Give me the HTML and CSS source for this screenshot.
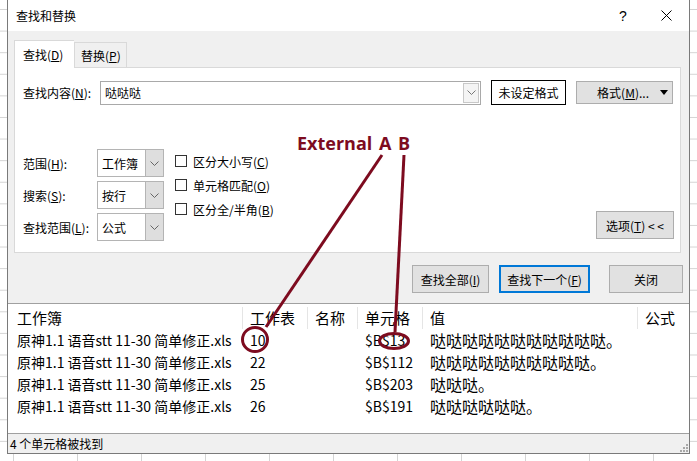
FILE: index.html
```html
<!DOCTYPE html>
<html lang="zh-CN">
<head>
	<meta charset="UTF-8">
	<title>查找和替换</title>
	<link rel="stylesheet" href="styles.css">
</head>
<body>
	<div class="desk">
		<div class="dialog">
			<div class="titlebar">
				<span class="title">查找和替换</span>
				<span class="help">?</span>
				<span class="close">
					<svg width="11" height="11" viewBox="0 0 11 11"><path d="M0.5 0.5L10.5 10.5M10.5 0.5L0.5 10.5" stroke="#000" stroke-width="1"/></svg>
				</span>
			</div>

			<div class="body">
				<div class="tabs">
					<div class="tab active">查找(<u>D</u>)</div>
					<div class="tab">替换(<u>P</u>)</div>
				</div>

				<div class="panel">
					<div class="findrow">
						<span class="findlabel">查找内容(<u>N</u>):</span>
						<div class="combo wide">
							<span class="val">哒哒哒</span>
							<span class="arrow light"><svg width="9" height="5" viewBox="0 0 9 5"><path d="M0.5 0.5L4.5 4.5L8.5 0.5" fill="none" stroke="#777"/></svg></span>
						</div>
						<div class="nofmt">未设定格式</div>
						<div class="btn fmt">格式(<u>M</u>)...<span class="tri"></span></div>
					</div>

					<div class="opts">
						<div class="selects">
							<div class="selrow">
								<span class="sellabel">范围(<u>H</u>):</span>
								<div class="combo sel"><span class="val">工作簿</span><span class="arrow"><svg width="9" height="5" viewBox="0 0 9 5"><path d="M0.5 0.5L4.5 4.5L8.5 0.5" fill="none" stroke="#666"/></svg></span></div>
							</div>
							<div class="selrow">
								<span class="sellabel">搜索(<u>S</u>):</span>
								<div class="combo sel"><span class="val">按行</span><span class="arrow"><svg width="9" height="5" viewBox="0 0 9 5"><path d="M0.5 0.5L4.5 4.5L8.5 0.5" fill="none" stroke="#666"/></svg></span></div>
							</div>
							<div class="selrow">
								<span class="sellabel">查找范围(<u>L</u>):</span>
								<div class="combo sel"><span class="val">公式</span><span class="arrow"><svg width="9" height="5" viewBox="0 0 9 5"><path d="M0.5 0.5L4.5 4.5L8.5 0.5" fill="none" stroke="#666"/></svg></span></div>
							</div>
						</div>

						<div class="checks">
							<div class="check"><span class="box"></span>区分大小写(<u>C</u>)</div>
							<div class="check"><span class="box"></span>单元格匹配(<u>O</u>)</div>
							<div class="check"><span class="box"></span>区分全/半角(<u>B</u>)</div>
						</div>

						<div class="btn options">选项(<u>T</u>) &lt; &lt;</div>
					</div>
				</div>

				<div class="actions">
					<div class="btn findall">查找全部(<u>I</u>)</div>
					<div class="btn findnext">查找下一个(<u>F</u>)</div>
					<div class="btn closebtn">关闭</div>
				</div>
			</div>

			<div class="results">
				<div class="head first">工作簿</div>
				<div class="head">工作表</div>
				<div class="head">名称</div>
				<div class="head">单元格</div>
				<div class="head">值</div>
				<div class="head">公式</div>

				<div class="cell first">原神1.1 语音stt 11-30 简单修正.xls</div>
				<div class="cell">10</div>
				<div class="cell"></div>
				<div class="cell">$B$13</div>
				<div class="cell value">哒哒哒哒哒哒哒哒哒哒哒。</div>
				<div class="cell"></div>

				<div class="cell first">原神1.1 语音stt 11-30 简单修正.xls</div>
				<div class="cell">22</div>
				<div class="cell"></div>
				<div class="cell">$B$112</div>
				<div class="cell value">哒哒哒哒哒哒哒哒哒哒。</div>
				<div class="cell"></div>

				<div class="cell first">原神1.1 语音stt 11-30 简单修正.xls</div>
				<div class="cell">25</div>
				<div class="cell"></div>
				<div class="cell">$B$203</div>
				<div class="cell value">哒哒哒。</div>
				<div class="cell"></div>

				<div class="cell first">原神1.1 语音stt 11-30 简单修正.xls</div>
				<div class="cell">26</div>
				<div class="cell"></div>
				<div class="cell">$B$191</div>
				<div class="cell value">哒哒哒哒哒哒。</div>
				<div class="cell"></div>
			</div>

			<div class="status">
				<span>4 个单元格被找到</span>
				<svg class="grip" width="8" height="8" viewBox="0 0 8 8">
					<rect x="6" y="0" width="2" height="2" fill="#a8a8a8"/>
					<rect x="3" y="3" width="2" height="2" fill="#a8a8a8"/>
					<rect x="6" y="3" width="2" height="2" fill="#a8a8a8"/>
					<rect x="0" y="6" width="2" height="2" fill="#a8a8a8"/>
					<rect x="3" y="6" width="2" height="2" fill="#a8a8a8"/>
					<rect x="6" y="6" width="2" height="2" fill="#a8a8a8"/>
				</svg>
			</div>
		</div>

		<!-- hand drawn annotation over the dialog -->
		<svg class="notes" width="697" height="461" viewBox="0 0 697 461">
			<text class="notetext" x="297" y="150">External A B</text>
			<path d="M382 155L266 327" stroke="#7d0b1f" stroke-width="3" fill="none"/>
			<path d="M404 155L395 332" stroke="#7d0b1f" stroke-width="3" fill="none"/>
			<ellipse cx="255" cy="339.5" rx="12.5" ry="12" stroke="#7d0b1f" stroke-width="3" fill="none"/>
			<ellipse cx="394" cy="341" rx="14.5" ry="7.5" stroke="#7d0b1f" stroke-width="3" fill="none"/>
		</svg>
	</div>
</body>
</html>
```

FILE: styles.css
```css
body
{
	margin: 0;
	font-family: "Noto Sans CJK SC", sans-serif;
	font-size: 12px;
	color: #000;
}

.desk
{
	position: relative;
	width: 697px;
	height: 461px;
	overflow: hidden;
	background-color: #fff;
	background-image: linear-gradient(to right, #d4d4d4 1px, transparent 1px),
		linear-gradient(to bottom, #d4d4d4 1px, transparent 1px);
	background-size: 64px 21.6px;
	background-position: 13px 9px;
}

.dialog
{
	margin-left: 7px;
	width: 683px;
	height: 454px;
	box-sizing: border-box;
	border: 1px solid #7a7a7a;
	border-top: none;
	background: #f0f0f0;
	display: flex;
	flex-direction: column;
}

/* title bar */
.titlebar
{
	height: 31px;
	flex: none;
	background: #fff;
	display: flex;
	align-items: center;
}

.title
{
	flex: 1;
	padding-left: 8px;
}

.help
{
	width: 40px;
	text-align: center;
	font-family: "Liberation Sans", sans-serif;
	font-size: 14px;
}

.close
{
	width: 46px;
	display: flex;
	justify-content: center;
}

/* main area */
.body
{
	padding: 9px 8px 10px 6px;
	flex: none;
}

.tabs
{
	display: flex;
	align-items: flex-end;
	height: 27px;
}

.tab
{
	box-sizing: border-box;
	height: 25px;
	width: 53px;
	border: 1px solid #d9d9d9;
	border-bottom: none;
	display: flex;
	align-items: center;
	padding-left: 6px;
}

.tab.active
{
	position: relative;
	z-index: 1;
	width: 60px;
	height: 28px;
	margin-bottom: -1px;
	padding-left: 8px;
	background: #fff;
	border-right: none;
}

.panel
{
	height: 186px;
	box-sizing: border-box;
	background: #fff;
	border: 1px solid #d9d9d9;
	padding: 12px 6px 11px 8px;
}

.findrow
{
	display: flex;
	align-items: center;
	height: 25px;
}

.findlabel
{
	width: 77px;
}

.combo
{
	box-sizing: border-box;
	display: flex;
	align-items: stretch;
	background: #fff;
	border: 1px solid #b4b4b4;
}

.combo .val
{
	flex: 1;
	display: flex;
	align-items: center;
	padding-left: 4px;
}

.combo.wide
{
	width: 381px;
	height: 24px;
	border-color: #a9a9a9;
}

.arrow
{
	width: 17px;
	display: flex;
	align-items: center;
	justify-content: center;
	background: #dedede;
	border-left: 1px solid #b4b4b4;
}

.arrow.light
{
	width: 14px;
	margin: 1px;
	background: #f4f4f4;
	border: 1px solid #c8c8c8;
}

.nofmt
{
	box-sizing: border-box;
	margin-left: 10px;
	width: 75px;
	height: 25px;
	border: 1px solid #000;
	display: flex;
	align-items: center;
	justify-content: center;
}

.btn
{
	box-sizing: border-box;
	background: #e1e1e1;
	border: 1px solid #adadad;
	display: flex;
	align-items: center;
	justify-content: center;
}

.fmt
{
	margin-left: 10px;
	width: 97px;
	height: 23px;
	justify-content: flex-end;
	padding-right: 4px;
}

.tri
{
	margin-left: 11px;
	width: 0;
	height: 0;
	border-left: 4px solid transparent;
	border-right: 4px solid transparent;
	border-top: 5px solid #000;
}

.opts
{
	margin-top: 44px;
	display: flex;
	align-items: flex-start;
}

.selects
{
	display: flex;
	flex-direction: column;
	gap: 4px;
}

.selrow
{
	display: flex;
	align-items: center;
	height: 28px;
}

.sellabel
{
	width: 74px;
}

.combo.sel
{
	width: 67px;
	height: 28px;
}

.checks
{
	margin-left: 11px;
	display: flex;
	flex-direction: column;
}

.check
{
	height: 24px;
	display: flex;
	align-items: center;
}

.box
{
	box-sizing: border-box;
	width: 12px;
	height: 12px;
	border: 1px solid #333;
	margin-right: 6px;
	background: #fff;
}

.options
{
	margin-left: auto;
	align-self: flex-end;
	margin-bottom: 2px;
	width: 78px;
	height: 28px;
}

.actions
{
	margin-top: 12px;
	margin-right: -2px;
	height: 28px;
	display: flex;
	justify-content: flex-end;
}

.findall
{
	width: 77px;
}

.findnext
{
	width: 91px;
	margin-left: 10px;
	border: 2px solid #0078d7;
}

.closebtn
{
	width: 74px;
	margin-left: 19px;
}

/* result list */
.results
{
	flex: 1;
	background: #fff;
	border-top: 1px solid #a0a0a0;
	display: grid;
	grid-template-columns: 234px 65px 50px 65px 215px 52px;
	grid-template-rows: 25px repeat(4, 22px);
	align-content: start;
	font-size: 15px;
}

.head
{
	align-self: end;
	height: 22px;
	line-height: 22px;
	padding-left: 7px;
	border-left: 1px solid #e5e5e5;
	white-space: nowrap;
}

.head.first
{
	border-left: none;
	padding-left: 9px;
}

.cell
{
	line-height: 22px;
	padding-left: 8px;
	white-space: nowrap;
	font-size: 14px;
}

.cell.first
{
	padding-left: 9px;
}

.cell.value
{
	font-size: 16px;
}

.status
{
	height: 20px;
	flex: none;
	box-sizing: border-box;
	border-top: 1px solid #a0a0a0;
	padding-left: 2px;
	display: flex;
	align-items: center;
}

.status span
{
	flex: 1;
}

.grip
{
	align-self: flex-end;
	margin: 0 1px 1px 0;
}

/* annotation layer */
.notes
{
	position: absolute;
	top: 0;
	left: 0;
	pointer-events: none;
}

.notetext
{
	font-family: "Open Sans", sans-serif;
	font-weight: 700;
	font-size: 18px;
	word-spacing: 2px;
	fill: #7d0b1f;
}
```
